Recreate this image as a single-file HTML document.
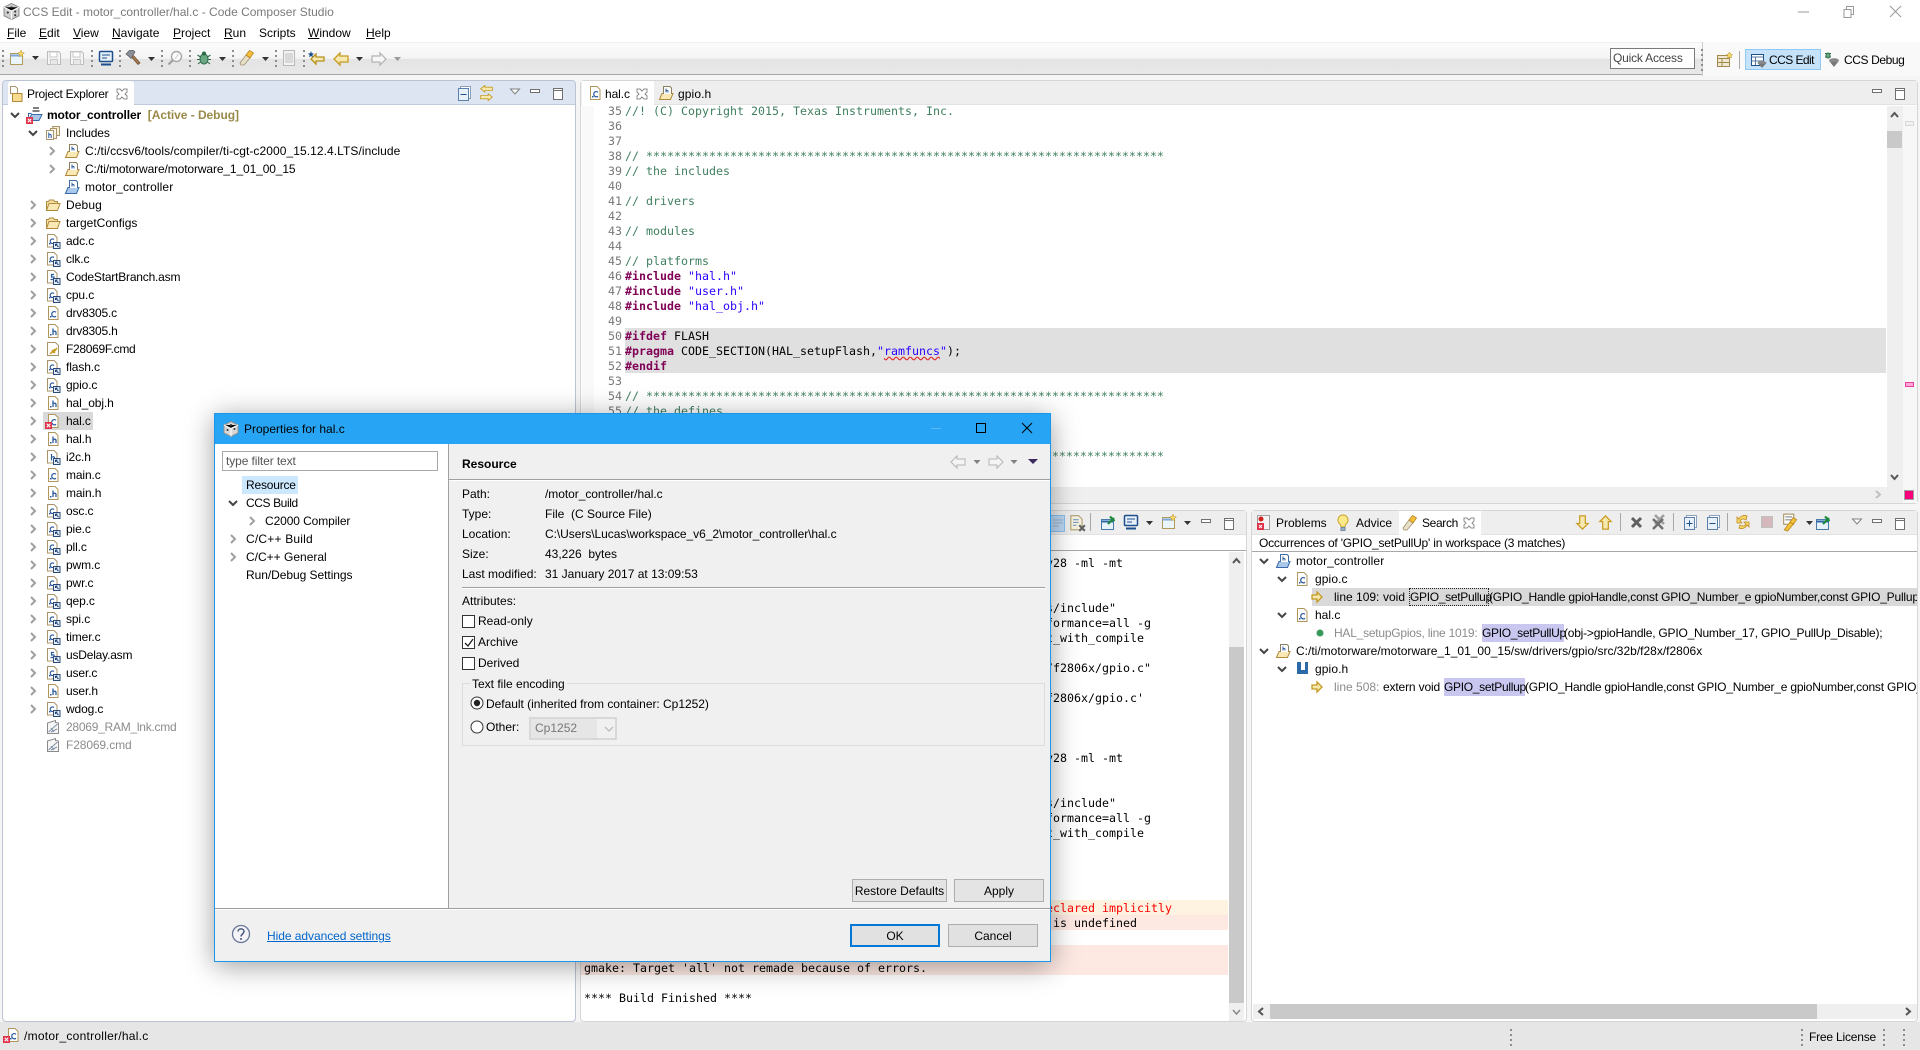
<!DOCTYPE html>
<html><head><meta charset="utf-8"><title>CCS Edit</title>
<style>
html,body{margin:0;padding:0;width:1920px;height:1050px;overflow:hidden;background:#f5f5f5;font:12px/18px "Liberation Sans",sans-serif;color:#000}
*{box-sizing:border-box}
.a{position:absolute;white-space:pre;height:18px;line-height:18px}
svg{position:absolute;overflow:visible}
.r{position:absolute;height:18px;white-space:pre;display:flex;align-items:center;letter-spacing:-.12px}
.r svg{position:static;flex:none}
.r .c{width:10px;height:12px;margin-right:7px}
.r .n{width:10px;height:12px;margin-right:7px}
.r .i{width:16px;height:16px;margin-right:5px}
.p{position:absolute;border:1px solid #d6d6d6;border-radius:4px;background:#fff;overflow:hidden}
.g{position:absolute;width:2px;background:repeating-linear-gradient(#8c8c8c 0 2px,transparent 2px 5px)}
.m u{text-decoration:underline}
.mono{position:absolute;font:11.63px/15px "DejaVu Sans Mono",monospace;white-space:pre;height:15px}
.ln{position:absolute;left:590px;width:32px;text-align:right;color:#787878;font:11.63px/15px "DejaVu Sans Mono",monospace}
.cd{position:absolute;left:625px;font:11.63px/15px "DejaVu Sans Mono",monospace;white-space:pre;color:#3f7f5f}
.k{color:#7f0055;font-weight:bold}.s{color:#2a00ff}.b{color:#000}
#dlg{position:absolute;left:214px;top:413px;width:837px;height:549px;background:#f0f0f0;border:1px solid #1a96ea;box-shadow:0 4px 26px rgba(0,0,0,.38);z-index:10}
.btn{position:absolute;height:23px;border:1px solid #adadad;background:#e1e1e1;text-align:center;line-height:22px}
.cb{position:absolute;width:13px;height:13px;border:1px solid #333;background:#fff}
</style></head><body>
<svg width="0" height="0" style="position:absolute">
<defs>
<symbol id="ch" viewBox="0 0 10 12"><path d="M3 2l4 4-4 4" fill="none" stroke="#a0a0a0" stroke-width="2"/></symbol>
<symbol id="dn" viewBox="0 0 10 12"><path d="M1 4l4 4 4-4" fill="none" stroke="#444" stroke-width="2"/></symbol>
<symbol id="fc" viewBox="0 0 16 16"><path d="M3.500 1.500h6.500l3 3v10h-9.500z" fill="#fff" stroke="#b0965a"/><path d="M11 7.200a2.600 2.600 0 1 0 0 4" fill="none" stroke="#2c5b9c" stroke-width="1.300"/><rect x="5" y="11" width="1.500" height="1.500" fill="#2c5b9c"/></symbol>
<symbol id="fh" viewBox="0 0 16 16"><path d="M3.500 1.500h6.500l3 3v10h-9.500z" fill="#fff" stroke="#b0965a"/><path d="M8 5.500v6.500M8 9c2-1.500 3-.8 3 .8v2.200" fill="none" stroke="#2c5b9c" stroke-width="1.300"/><rect x="5" y="11" width="1.500" height="1.500" fill="#2c5b9c"/></symbol>
<symbol id="fl" viewBox="0 0 16 16"><path d="M2.500 1.500h6.500l3 3v9.500h-9.500z" fill="#fff" stroke="#a89468"/><path d="M9 6.500a2.300 2.300 0 1 0 0 3.500" fill="none" stroke="#2c5b9c" stroke-width="1.200"/><rect x="4" y="10" width="1.400" height="1.400" fill="#2c5b9c"/><rect x="8.500" y="9.500" width="6.500" height="6" fill="#e8eef7" stroke="#2a4a7a"/><path d="M10.500 11l3 3M10.500 11h2M10.500 11v2" stroke="#1d3f78" fill="none"/></symbol>
<symbol id="fs" viewBox="0 0 16 16"><path d="M2.500 1.500h6.500l3 3v9.500h-9.500z" fill="#fff" stroke="#a89468"/><path d="M9 5.500H6.500v2.500H9v2.500H5.500" fill="none" stroke="#2c5b9c" stroke-width="1.200"/><rect x="8.500" y="9.500" width="6.500" height="6" fill="#e8eef7" stroke="#2a4a7a"/><path d="M10.500 11l3 3M10.500 11h2M10.500 11v2" stroke="#1d3f78" fill="none"/></symbol>
<symbol id="fhl" viewBox="0 0 16 16"><path d="M2.500 1.500h6.500l3 3v9.500h-9.500z" fill="#fff" stroke="#a89468"/><path d="M6.500 5v6.500M6.500 8.500c2-1.500 3-.8 3 .8v2.200" fill="none" stroke="#2c5b9c" stroke-width="1.200"/><rect x="8.500" y="9.500" width="6.500" height="6" fill="#e8eef7" stroke="#2a4a7a"/><path d="M10.500 11l3 3M10.500 11h2M10.500 11v2" stroke="#1d3f78" fill="none"/></symbol>
<symbol id="cmd" viewBox="0 0 16 16"><path d="M2.500 1.500h8l3 3v10h-11z" fill="#fff" stroke="#a89468"/><path d="M5 13l5-5M8 12l4-5M7 9l3 3" stroke="#c89a20" stroke-width="1.500" fill="none"/></symbol>
<symbol id="cmdg" viewBox="0 0 16 16"><path d="M2.500 14.500V4l8-2.500v2l3 .5v10.500z" fill="#f6f6f6" stroke="#8a8a8a"/><path d="M3.500 13l9-8M6 13l6-3M6 9l3 4" stroke="#8090a8" fill="none"/></symbol>
<symbol id="fo" viewBox="0 0 16 16"><path d="M1.500 13.500V4.500h2l1-1.500h4l1 1.500h3v2" fill="#f3dfa0" stroke="#b08a3c"/><path d="M1.500 13.500l2.500-7h11l-2.500 7z" fill="#fbe9b5" stroke="#b08a3c"/></symbol>
<symbol id="foh" viewBox="0 0 16 16"><path d="M1.500 14.500l2.500-6h11l-2.500 6z" fill="#fbe9b5" stroke="#b08a3c"/><path d="M5.500 9V1.500h6.500l1.500 1.500v6" fill="#fff" stroke="#8a8060"/><path d="M8 3.500v4M8 6c1.300-1 2-.5 2 .5v1" stroke="#2c5b9c" fill="none"/></symbol>
<symbol id="fob" viewBox="0 0 16 16"><path d="M1.500 14.500l2.500-6h11l-2.500 6z" fill="#a9c8ea" stroke="#3a6aa8"/><path d="M5.500 9V1.500h6.500l1.500 1.500v6" fill="#fff" stroke="#3a6aa8"/><path d="M8 3.500v4M8 6c1.300-1 2-.5 2 .5v1" stroke="#2c5b9c" fill="none"/></symbol>
<symbol id="inc" viewBox="0 0 16 16"><path d="M7.500 1.500h7v9h-3z" fill="#f8f0d8" stroke="#a89468"/><path d="M5.500 3.500h6v10h-6z" fill="#fbf5e0" stroke="#a89468"/><rect x="1.500" y="5.500" width="7" height="9" fill="#fff" stroke="#a89468"/><path d="M3.800 7.500v5.500M3.800 10c1.300-1 2.400-.5 2.400.5V13" stroke="#2c5b9c" fill="none"/></symbol>
<symbol id="prj" viewBox="0 0 16 16"><path d="M1.500 13.500l3-6h10.500l-3 6z" fill="#a9c8ea" stroke="#3a6aa8"/><path d="M1.500 13.500V6.500h3" fill="none" stroke="#3a6aa8"/><path d="M6 1h6M5.500 4h7" stroke="#555" stroke-width="1.400"/></symbol>
<symbol id="err" viewBox="0 0 8 8"><rect width="8" height="8" fill="#e0324a"/><path d="M2 2l4 4M6 2l-4 4" stroke="#fff" stroke-width="1.300"/></symbol>
<symbol id="x" viewBox="0 0 16 16"><path d="M3 3h3l2 2 2-2h3v3l-2 2 2 2v3h-3l-2-2-2 2H3v-3l2-2-2-2z" fill="#fff" stroke="#8c8c8c"/></symbol>
<symbol id="mn" viewBox="0 0 16 16"><rect x="3.500" y="5.500" width="9" height="3" fill="#fff" stroke="#707070"/></symbol>
<symbol id="mx" viewBox="0 0 16 16"><rect x="3.500" y="2.500" width="9" height="11" fill="#fff" stroke="#707070"/><path d="M3.500 4.500h9" stroke="#707070"/></symbol>
<symbol id="mu" viewBox="0 0 16 16"><path d="M3.500 5h9L8 10z" fill="#fff" stroke="#808080"/></symbol>
<symbol id="ca" viewBox="0 0 8 8"><path d="M0 2h7L3.500 6z" fill="#333"/></symbol>
<symbol id="arr" viewBox="0 0 18 18"><path d="M8 3L2 9l6 6v-3h8V6H8z" fill="#f5e9b0" stroke="#c89a20" stroke-width="1.300"/></symbol>
<symbol id="arg" viewBox="0 0 18 18"><path d="M8 3L2 9l6 6v-3h8V6H8z" fill="#f7f7f7" stroke="#b4b4b4" stroke-width="1.300"/></symbol>
<symbol id="mon" viewBox="0 0 16 16"><rect x="1.500" y="1.500" width="13" height="10" rx="1" fill="#e8f0fa" stroke="#1d4f8c" stroke-width="1.500"/><path d="M4 5h8M4 8h5" stroke="#1d4f8c"/><path d="M3 14.500h10" stroke="#1d4f8c" stroke-width="2"/></symbol>
<symbol id="new" viewBox="0 0 16 16"><rect x="1.500" y="3.500" width="12" height="11" fill="#eaf4fb" stroke="#b09a5a"/><path d="M1.500 5.500h12" stroke="#7fa8d8" stroke-width="2"/><path d="M12 0l1 2.500 2.500.5-2 1.500.5 2.500L12 5.500 10 7l.5-2.500-2-1.500 2.500-.5z" fill="#f5d867" stroke="#b8902a" stroke-width=".5"/></symbol>
<symbol id="sv" viewBox="0 0 16 16"><path d="M1.500 1.500h11l2 2v11h-13z" fill="#f4f4f4" stroke="#bcbcbc"/><rect x="4" y="2" width="7" height="5" fill="#fff" stroke="#c8c8c8"/><rect x="4.500" y="9.500" width="7" height="5" fill="#e8e8e8" stroke="#c8c8c8"/></symbol>
<symbol id="ham" viewBox="0 0 16 16"><path d="M6.500 7l6.500 7.500 2-1.500L8.500 5.500" fill="#a87a50" stroke="#6a4a2c" stroke-width=".7"/><path d="M1 4l3.500-3.500h4L10 2 7 7l-1 1.500-2-2z" fill="#8b8f96" stroke="#55585c" stroke-width=".7"/></symbol>
<symbol id="mag" viewBox="0 0 16 16"><circle cx="9.500" cy="6.500" r="5" fill="#fdfdfd" stroke="#a8a8a8" stroke-width="1.400"/><path d="M6 10L1.500 14.500" stroke="#a0a0a0" stroke-width="2.200"/><path d="M8 9l3.500-5" stroke="#c8c8c8"/></symbol>
<symbol id="bug" viewBox="0 0 16 16"><ellipse cx="8" cy="9" rx="4" ry="5" fill="#6aa884" stroke="#2e6a4a"/><circle cx="8" cy="3.500" r="2" fill="#2e6a4a"/><path d="M1.500 5l3 2M14.500 5l-3 2M1 9.500h3M15 9.500h-3M2 14l2.500-2M14 14l-2.500-2" stroke="#2e6a4a" stroke-width="1.100"/></symbol>
<symbol id="fla" viewBox="0 0 16 16"><path d="M1 13l6-8 4 3-6 7H2z" fill="#e8dfc8" stroke="#a09070" stroke-width=".8"/><path d="M7 5l3.500-4.500 4 2.500-3.500 5z" fill="#f2c03c" stroke="#b8861c" stroke-width=".8"/></symbol>
<symbol id="doc" viewBox="0 0 16 16"><rect x="2.500" y=".5" width="11" height="15" fill="#f2f2f2" stroke="#b8b8b8"/><rect x="5" y="4" width="6" height="8" fill="#fff" stroke="#bcbcbc"/><path d="M6 6h4M6 8h4M6 10h4" stroke="#b0b0b0"/></symbol>
<symbol id="bk" viewBox="0 0 18 18"><path d="M8 4L3 9l5 5v-3h8V7H8z" fill="#f5e9b0" stroke="#b8901e" stroke-width="1.300"/><path d="M3 1l.8 2.200L6 3.500 4.400 5l.5 2.200L3 6 1.100 7.200 1.600 5 0 3.500l2.200-.3z" fill="#1d4f8c"/></symbol>
<symbol id="pin" viewBox="0 0 16 16"><rect x="1.500" y="4.500" width="12" height="10" fill="#e8f2fb" stroke="#4a7aa8"/><path d="M1.500 6.500h12" stroke="#2c6aa8" stroke-width="2"/><path d="M8 9l6-6M10 1.500l4.500 4.500" stroke="#1c8a3c" stroke-width="2.200"/></symbol>
<symbol id="pers" viewBox="0 0 16 16"><rect x=".5" y="3.500" width="12" height="11" fill="#f0e8d0" stroke="#a08a50"/><path d="M.5 6.500h12M5 6.500v8M.5 10.500h12" stroke="#a08a50"/><path d="M12.500 0l1 2 2 .5-1.500 1.500.5 2-2-1-2 1 .5-2L9.500 2.500l2-.5z" fill="#f5d867" stroke="#b8902a" stroke-width=".5"/></symbol>
<symbol id="edit" viewBox="0 0 16 16"><rect x=".5" y="1.500" width="12" height="11" fill="#fff" stroke="#1d4f8c"/><path d="M.5 4h12M4.500 4v8M.5 8h12" stroke="#5a7aa0"/><ellipse cx="11" cy="10" rx="4.500" ry="2" fill="#888"/><path d="M7.500 11l3.500 4 3.500-4" fill="#777"/></symbol>
<symbol id="dbg" viewBox="0 0 16 16"><path d="M1 1.500h2M5 1.500h2M1 5h2M5 5h2" stroke="#2e6a4a"/><ellipse cx="4" cy="3.500" rx="2" ry="2.500" fill="#6aa884" stroke="#2e6a4a"/><ellipse cx="10" cy="8.500" rx="5" ry="2.300" fill="#888"/><path d="M6 10l4 5 4-5" fill="#777"/></symbol>
</defs></svg>

<!-- title -->
<div style="position:absolute;left:0;top:0;width:1920px;height:42px;background:#fff"></div>
<svg style="left:3px;top:3px" width="17" height="17" viewBox="0 0 16 16"><path d="M8 .5l7 3.500v8l-7 3.500-7-3.500V4z" fill="#d0d0d0" stroke="#909090"/><path d="M1 4l7 3.500L15 4M8 7.500v8" stroke="#fff"/><circle cx="8" cy="4" r="1" fill="#333"/><circle cx="4.500" cy="9" r="1" fill="#333"/><circle cx="11.500" cy="8" r="1" fill="#333"/><circle cx="11.500" cy="11.500" r="1" fill="#333"/></svg>
<div class="a" style="left:23px;top:3px;color:#7a7a7a">CCS Edit - motor_controller/hal.c - Code Composer Studio</div>
<div class="m">
<div class="a" style="left:7px;top:24px"><u>F</u>ile</div><div class="a" style="left:39px;top:24px"><u>E</u>dit</div><div class="a" style="left:73px;top:24px"><u>V</u>iew</div><div class="a" style="left:112px;top:24px"><u>N</u>avigate</div><div class="a" style="left:173px;top:24px"><u>P</u>roject</div><div class="a" style="left:224px;top:24px"><u>R</u>un</div><div class="a" style="left:259px;top:24px">Scripts</div><div class="a" style="left:308px;top:24px"><u>W</u>indow</div><div class="a" style="left:366px;top:24px"><u>H</u>elp</div>
</div>
<svg style="left:1798px;top:5px" width="115" height="14"><path d="M0 7h11" stroke="#999"/><path d="M46 4.500h7v8h-7zM48.500 4.500V1.500h7v8h-2.500" fill="none" stroke="#999"/><path d="M92 1l11 11M103 1L92 12" stroke="#999"/></svg>

<!-- toolbar -->
<div style="position:absolute;left:0;top:42px;width:1702px;height:33px;background:linear-gradient(#fbfbfb 0,#f4f4f4 50%,#e4e4e4 52%,#e8e8e8 100%);border-bottom:1px solid #a8a8a8;border-top:1px solid #f0f0f0"></div>
<div style="position:absolute;left:1702px;top:42px;width:218px;height:34px;background:#f9f9f9;border-left:1px solid #ccc"></div>
<div class="g" style="left:2px;top:50px;height:18px"></div>
<svg style="left:9px;top:50px" width="16" height="16"><use href="#new"/></svg><svg style="left:32px;top:54px" width="8" height="8"><use href="#ca"/></svg>
<svg style="left:46px;top:50px" width="16" height="16"><use href="#sv"/></svg><svg style="left:69px;top:50px" width="16" height="16"><use href="#sv"/></svg>
<div class="g" style="left:91px;top:50px;height:18px"></div>
<svg style="left:98px;top:50px" width="16" height="16"><use href="#mon"/></svg>
<div class="g" style="left:119px;top:50px;height:18px"></div>
<svg style="left:125px;top:50px" width="16" height="16"><use href="#ham"/></svg><svg style="left:148px;top:55px" width="8" height="8"><use href="#ca"/></svg>
<div class="g" style="left:161px;top:50px;height:18px"></div>
<svg style="left:167px;top:50px" width="16" height="16"><use href="#mag"/></svg>
<div class="g" style="left:189px;top:50px;height:18px"></div>
<svg style="left:196px;top:50px" width="16" height="16"><use href="#bug"/></svg><svg style="left:219px;top:55px" width="8" height="8"><use href="#ca"/></svg>
<div class="g" style="left:232px;top:50px;height:18px"></div>
<svg style="left:239px;top:50px" width="16" height="16"><use href="#fla"/></svg><svg style="left:262px;top:55px" width="8" height="8"><use href="#ca"/></svg>
<div class="g" style="left:275px;top:50px;height:18px"></div>
<svg style="left:281px;top:50px" width="16" height="16"><use href="#doc"/></svg>
<div class="g" style="left:303px;top:50px;height:18px"></div>
<svg style="left:308px;top:50px" width="18" height="18"><use href="#bk"/></svg>
<svg style="left:332px;top:50px" width="18" height="18"><use href="#arr"/></svg><svg style="left:356px;top:55px" width="8" height="8"><use href="#ca"/></svg>
<svg style="left:370px;top:50px;transform:scaleX(-1)" width="18" height="18"><use href="#arg"/></svg><svg style="left:394px;top:55px" width="8" height="8"><use href="#ca" style="opacity:.45"/></svg>
<div style="position:absolute;left:1610px;top:48px;width:85px;height:21px;border:1px solid #7a7a7a;background:#fff;line-height:19px;padding-left:2px;color:#444;letter-spacing:-.2px">Quick Access</div>
<div class="g" style="left:1701px;top:49px;height:22px"></div>
<svg style="left:1717px;top:52px" width="16" height="16"><use href="#pers"/></svg>
<div style="position:absolute;left:1739px;top:51px;width:1px;height:18px;background:#aaa"></div>
<div style="position:absolute;left:1745px;top:49px;width:76px;height:21px;background:#c6e2f9;border:1px solid #90c8f6"></div>
<svg style="left:1751px;top:53px" width="16" height="16"><use href="#edit"/></svg>
<div class="a" style="left:1769px;top:51px;letter-spacing:-.55px">CCS Edit</div>
<svg style="left:1824px;top:52px" width="16" height="16"><use href="#dbg"/></svg>
<div class="a" style="left:1844px;top:51px;letter-spacing:-.4px">CCS Debug</div>

<!-- project explorer -->
<div class="p" style="left:2px;top:80px;width:574px;height:942px;border-color:#bcc3d2"></div>
<div style="position:absolute;left:3px;top:81px;width:572px;height:24px;background:#dde5f3;border-bottom:1px solid #c0cadb;border-radius:3px 3px 0 0"></div>
<div style="position:absolute;left:8px;top:81px;width:126px;height:25px;background:#fff;border-radius:3px 3px 0 0"></div>
<svg style="left:8px;top:85px" width="16" height="18" viewBox="0 0 16 18"><path d="M2.500 1.500h5l2 2v5h-7z" fill="#fff" stroke="#a89468"/><path d="M4.500 8.500h9.500v8h-9.500z" fill="#f8dc90" stroke="#b08a3c"/></svg>
<div class="a" style="left:27px;top:85px;letter-spacing:-.25px">Project Explorer</div>
<svg style="left:114px;top:86px" width="16" height="16"><use href="#x"/></svg>
<svg style="left:457px;top:85px" width="16" height="16" viewBox="0 0 16 16"><rect x="3.500" y="1.500" width="10" height="12" fill="#fff" stroke="#8ca0bc"/><rect x="1.500" y="3.500" width="10" height="12" fill="#e8f0fa" stroke="#5a7fa8"/><path d="M3.500 9.500h6" stroke="#1d4f8c"/></svg>
<svg style="left:479px;top:84px" width="15" height="18" viewBox="0 0 18 20"><path d="M7 1L2 5l5 4V7h9V3H7zM11 11l5 4-5 4v-2H2v-4h9z" fill="#f5e9b0" stroke="#c49a20"/></svg>
<svg style="left:507px;top:84px" width="16" height="16"><use href="#mu"/></svg><svg style="left:527px;top:84px" width="16" height="16"><use href="#mn"/></svg><svg style="left:550px;top:86px" width="16" height="16"><use href="#mx"/></svg>

<div class="r" style="left:10px;top:106px;letter-spacing:0"><svg class="c"><use href="#dn"/></svg><svg class="i" style="margin-right:4px"><use href="#prj"/></svg><span><b style="letter-spacing:-.12px">motor_controller</b>  <b style="color:#9a8a4a;letter-spacing:-.05px">[Active - Debug]</b></span></div>
<svg style="left:26px;top:117px" width="7" height="7"><use href="#err"/></svg>
<div class="r" style="left:28px;top:124px"><svg class="c"><use href="#dn"/></svg><svg class="i"><use href="#inc"/></svg><span>Includes</span></div>
<div class="r" style="left:47px;top:142px;letter-spacing:.07px"><svg class="c"><use href="#ch"/></svg><svg class="i"><use href="#foh"/></svg><span>C:/ti/ccsv6/tools/compiler/ti-cgt-c2000_15.12.4.LTS/include</span></div>
<div class="r" style="left:47px;top:160px"><svg class="c"><use href="#ch"/></svg><svg class="i"><use href="#foh"/></svg><span>C:/ti/motorware/motorware_1_01_00_15</span></div>
<div class="r" style="left:47px;top:178px;letter-spacing:.1px"><svg class="n"></svg><svg class="i"><use href="#fob"/></svg><span>motor_controller</span></div>
<div class="r" style="left:28px;top:196px;letter-spacing:.1px"><svg class="c"><use href="#ch"/></svg><svg class="i"><use href="#fo"/></svg><span>Debug</span></div>
<div class="r" style="left:28px;top:214px;letter-spacing:0"><svg class="c"><use href="#ch"/></svg><svg class="i"><use href="#fo"/></svg><span>targetConfigs</span></div>
<div class="r" style="left:28px;top:232px"><svg class="c"><use href="#ch"/></svg><svg class="i"><use href="#fl"/></svg><span>adc.c</span></div>
<div class="r" style="left:28px;top:250px"><svg class="c"><use href="#ch"/></svg><svg class="i"><use href="#fl"/></svg><span>clk.c</span></div>
<div class="r" style="left:28px;top:268px;letter-spacing:-.2px"><svg class="c"><use href="#ch"/></svg><svg class="i"><use href="#fs"/></svg><span>CodeStartBranch.asm</span></div>
<div class="r" style="left:28px;top:286px"><svg class="c"><use href="#ch"/></svg><svg class="i"><use href="#fl"/></svg><span>cpu.c</span></div>
<div class="r" style="left:28px;top:304px;letter-spacing:-.2px"><svg class="c"><use href="#ch"/></svg><svg class="i"><use href="#fc"/></svg><span>drv8305.c</span></div>
<div class="r" style="left:28px;top:322px;letter-spacing:-.2px"><svg class="c"><use href="#ch"/></svg><svg class="i"><use href="#fh"/></svg><span>drv8305.h</span></div>
<div class="r" style="left:28px;top:340px;letter-spacing:-.3px"><svg class="c"><use href="#ch"/></svg><svg class="i"><use href="#cmd"/></svg><span>F28069F.cmd</span></div>
<div class="r" style="left:28px;top:358px"><svg class="c"><use href="#ch"/></svg><svg class="i"><use href="#fl"/></svg><span>flash.c</span></div>
<div class="r" style="left:28px;top:376px"><svg class="c"><use href="#ch"/></svg><svg class="i"><use href="#fl"/></svg><span>gpio.c</span></div>
<div class="r" style="left:28px;top:394px"><svg class="c"><use href="#ch"/></svg><svg class="i"><use href="#fh"/></svg><span>hal_obj.h</span></div>
<div style="position:absolute;left:43px;top:412px;width:50px;height:18px;background:#d9d9d9"></div>
<div class="r" style="left:28px;top:412px"><svg class="c"><use href="#ch"/></svg><svg class="i"><use href="#fc"/></svg><span>hal.c</span></div>
<svg style="left:45px;top:422px" width="7" height="7"><use href="#err"/></svg>
<div class="r" style="left:28px;top:430px"><svg class="c"><use href="#ch"/></svg><svg class="i"><use href="#fh"/></svg><span>hal.h</span></div>
<div class="r" style="left:28px;top:448px"><svg class="c"><use href="#ch"/></svg><svg class="i"><use href="#fhl"/></svg><span>i2c.h</span></div>
<div class="r" style="left:28px;top:466px"><svg class="c"><use href="#ch"/></svg><svg class="i"><use href="#fc"/></svg><span>main.c</span></div>
<div class="r" style="left:28px;top:484px"><svg class="c"><use href="#ch"/></svg><svg class="i"><use href="#fh"/></svg><span>main.h</span></div>
<div class="r" style="left:28px;top:502px"><svg class="c"><use href="#ch"/></svg><svg class="i"><use href="#fl"/></svg><span>osc.c</span></div>
<div class="r" style="left:28px;top:520px"><svg class="c"><use href="#ch"/></svg><svg class="i"><use href="#fl"/></svg><span>pie.c</span></div>
<div class="r" style="left:28px;top:538px"><svg class="c"><use href="#ch"/></svg><svg class="i"><use href="#fl"/></svg><span>pll.c</span></div>
<div class="r" style="left:28px;top:556px"><svg class="c"><use href="#ch"/></svg><svg class="i"><use href="#fl"/></svg><span>pwm.c</span></div>
<div class="r" style="left:28px;top:574px"><svg class="c"><use href="#ch"/></svg><svg class="i"><use href="#fl"/></svg><span>pwr.c</span></div>
<div class="r" style="left:28px;top:592px"><svg class="c"><use href="#ch"/></svg><svg class="i"><use href="#fl"/></svg><span>qep.c</span></div>
<div class="r" style="left:28px;top:610px"><svg class="c"><use href="#ch"/></svg><svg class="i"><use href="#fl"/></svg><span>spi.c</span></div>
<div class="r" style="left:28px;top:628px"><svg class="c"><use href="#ch"/></svg><svg class="i"><use href="#fl"/></svg><span>timer.c</span></div>
<div class="r" style="left:28px;top:646px;letter-spacing:-.2px"><svg class="c"><use href="#ch"/></svg><svg class="i"><use href="#fs"/></svg><span>usDelay.asm</span></div>
<div class="r" style="left:28px;top:664px"><svg class="c"><use href="#ch"/></svg><svg class="i"><use href="#fl"/></svg><span>user.c</span></div>
<div class="r" style="left:28px;top:682px"><svg class="c"><use href="#ch"/></svg><svg class="i"><use href="#fh"/></svg><span>user.h</span></div>
<div class="r" style="left:28px;top:700px"><svg class="c"><use href="#ch"/></svg><svg class="i"><use href="#fl"/></svg><span>wdog.c</span></div>
<div class="r" style="left:28px;top:718px;color:#8c8c8c;letter-spacing:-.25px"><svg class="n"></svg><svg class="i"><use href="#cmdg"/></svg><span>28069_RAM_lnk.cmd</span></div>
<div class="r" style="left:28px;top:736px;color:#8c8c8c"><svg class="n"></svg><svg class="i"><use href="#cmdg"/></svg><span>F28069.cmd</span></div>

<!-- editor -->
<div class="p" style="left:580px;top:80px;width:1338px;height:424px"></div>
<div style="position:absolute;left:581px;top:81px;width:1336px;height:24px;background:#eee;border-bottom:1px solid #e2e2e2"></div>
<div style="position:absolute;left:582px;top:81px;width:72px;height:25px;background:#fff"></div>
<svg style="left:587px;top:85px" width="16" height="16"><use href="#fc"/></svg>
<div class="a" style="left:605px;top:85px;letter-spacing:-.1px">hal.c</div>
<svg style="left:634px;top:86px" width="16" height="16"><use href="#x"/></svg>
<svg style="left:658px;top:85px" width="16" height="16"><use href="#foh"/></svg>
<div class="a" style="left:678px;top:85px;letter-spacing:.1px">gpio.h</div>
<svg style="left:1869px;top:84px" width="16" height="16"><use href="#mn"/></svg><svg style="left:1892px;top:86px" width="16" height="16"><use href="#mx"/></svg>
<div style="position:absolute;left:582px;top:106px;width:12px;height:380px;background:#f9f9f9"></div>
<div style="position:absolute;left:625px;top:328px;width:1261px;height:45px;background:#e0e0e0"></div>
<div style="position:absolute;left:581px;top:104px;width:1306px;height:383px;overflow:hidden">
<div style="position:absolute;left:-581px;top:-104px;width:1900px;height:600px">
<div class="ln" style="top:104px">35<br>36<br>37<br>38<br>39<br>40<br>41<br>42<br>43<br>44<br>45<br>46<br>47<br>48<br>49<br>50<br>51<br>52<br>53<br>54<br>55<br>56<br>57<br>58</div>
<div class="cd" style="top:104px">//! (C) Copyright 2015, Texas Instruments, Inc.


// **************************************************************************
// the includes

// drivers

// modules

// platforms
<span class="k">#include</span> <span class="s">"hal.h"</span>
<span class="k">#include</span> <span class="s">"user.h"</span>
<span class="k">#include</span> <span class="s">"hal_obj.h"</span>

<span class="k">#ifdef</span><span class="b"> FLASH</span>
<span class="k">#pragma</span><span class="b"> CODE_SECTION(HAL_setupFlash,</span><span class="s">"<span style="text-decoration:underline wavy #e03030">ramfuncs</span>"</span><span class="b">);</span>
<span class="k">#endif</span>

// **************************************************************************
// the defines


// **************************************************************************</div>
</div></div>
<div style="position:absolute;left:1887px;top:106px;width:16px;height:381px;background:#efefef"></div>
<div style="position:absolute;left:1887px;top:131px;width:15px;height:17px;background:#c9c9c9"></div>
<svg style="left:1890px;top:111px" width="9" height="8"><path d="M1 6l3.500-4L8 6" fill="none" stroke="#555" stroke-width="2"/></svg>
<svg style="left:1890px;top:473px" width="9" height="8"><path d="M1 2l3.500 4L8 2" fill="none" stroke="#555" stroke-width="2"/></svg>
<div style="position:absolute;left:1903px;top:106px;width:14px;height:397px;background:#f7f7f7"></div>
<div style="position:absolute;left:1905px;top:121px;width:9px;height:5px;background:#f0f0f0;border:1px solid #d8d8d8"></div>
<div style="position:absolute;left:1905px;top:382px;width:9px;height:5px;background:#ffa8d8;border:1px solid #f040a0"></div>
<div style="position:absolute;left:1905px;top:491px;width:8px;height:8px;background:#f8007c;box-shadow:0 0 0 1px #a0a0a0"></div>
<div style="position:absolute;left:581px;top:487px;width:1322px;height:16px;background:#efefef"></div>
<svg style="left:1874px;top:490px" width="8" height="9"><path d="M2 1l4 3.500L2 8" fill="none" stroke="#c0c0c0" stroke-width="2"/></svg>

<!-- console -->
<div class="p" style="left:580px;top:510px;width:667px;height:512px"></div>
<div style="position:absolute;left:581px;top:511px;width:665px;height:24px;background:#eee;border-bottom:1px solid #e2e2e2"></div>
<div style="position:absolute;left:581px;top:550px;width:665px;height:1px;background:#a8a8a8"></div>
<div style="position:absolute;left:1040px;top:515px;width:25px;height:17px;background:#bcd9f4;border:1px solid #8cc0f0"></div>
<svg style="left:1052px;top:518px" width="12" height="12"><path d="M1 2h10M1 5h10M1 8h6" stroke="#9cb4cc"/></svg>
<svg style="left:1068px;top:514px" width="18" height="18" viewBox="0 0 16 16"><path d="M2.500 1.500h7l3 3v9.500h-10z" fill="#f4f0e0" stroke="#b0a070"/><path d="M4.500 5h5M4.500 7.500h5M4.500 10h3" stroke="#7a9cc0"/><path d="M10 10l5 5M15 10l-5 5" stroke="#606060" stroke-width="1.800"/></svg>
<div style="position:absolute;left:1090px;top:513px;width:1px;height:18px;background:#a8a8a8"></div>
<svg style="left:1100px;top:515px" width="16" height="16"><use href="#pin"/></svg>
<svg style="left:1123px;top:514px" width="16" height="16"><use href="#mon"/></svg><svg style="left:1146px;top:519px" width="8" height="8"><use href="#ca"/></svg>
<svg style="left:1161px;top:514px" width="16" height="16"><use href="#new"/></svg><svg style="left:1184px;top:519px" width="8" height="8"><use href="#ca"/></svg>
<svg style="left:1198px;top:514px" width="16" height="16"><use href="#mn"/></svg><svg style="left:1221px;top:516px" width="16" height="16"><use href="#mx"/></svg>
<div style="position:absolute;left:1229px;top:552px;width:15px;height:469px;background:#efefef"></div>
<div style="position:absolute;left:1229px;top:647px;width:15px;height:356px;background:#c9c9c9"></div>
<svg style="left:1232px;top:557px" width="9" height="8"><path d="M1 6l3.500-4L8 6" fill="none" stroke="#555" stroke-width="2"/></svg>
<svg style="left:1232px;top:1008px" width="9" height="8"><path d="M1 2l3.500 4L8 2" fill="none" stroke="#888" stroke-width="1.500"/></svg>
<div style="position:absolute;left:581px;top:900px;width:647px;height:15px;background:#fdf3e0"></div>
<div style="position:absolute;left:581px;top:915px;width:647px;height:15px;background:#fde8e2"></div>
<div style="position:absolute;left:581px;top:945px;width:647px;height:30px;background:#fde8e2"></div>
<div class="mono" style="left:1046px;top:556px">v28 -ml -mt</div>
<div class="mono" style="left:1046px;top:601px">s/include"</div>
<div class="mono" style="left:1046px;top:616px">formance=all -g</div>
<div class="mono" style="left:1046px;top:631px">t_with_compile</div>
<div class="mono" style="left:1046px;top:661px">/f2806x/gpio.c"</div>
<div class="mono" style="left:1046px;top:691px">f2806x/gpio.c'</div>
<div class="mono" style="left:1046px;top:751px">v28 -ml -mt</div>
<div class="mono" style="left:1046px;top:796px">s/include"</div>
<div class="mono" style="left:1046px;top:811px">formance=all -g</div>
<div class="mono" style="left:1046px;top:826px">t_with_compile</div>
<div class="mono" style="left:1046px;top:901px;color:#f00">eclared implicitly</div>
<div class="mono" style="left:1053px;top:916px">is undefined</div>
<div class="mono" style="left:584px;top:961px">gmake: Target 'all' not remade because of errors.</div>
<div class="mono" style="left:584px;top:991px">**** Build Finished ****</div>

<!-- search -->
<div class="p" style="left:1251px;top:510px;width:667px;height:512px"></div>
<div style="position:absolute;left:1252px;top:511px;width:665px;height:24px;background:#eee;border-bottom:1px solid #e2e2e2"></div>
<div style="position:absolute;left:1399px;top:511px;width:82px;height:25px;background:#fff"></div>
<svg style="left:1256px;top:514px" width="16" height="18" viewBox="0 0 16 18"><rect x="1.500" y="1.500" width="12" height="14" fill="#f4f4f4" stroke="#a0a0a0"/><circle cx="5" cy="5" r="2.500" fill="#d02020"/><path d="M1 9h7v7H1z" fill="#e0324a"/><path d="M3 11l3 3M6 11l-3 3" stroke="#fff"/></svg>
<div class="a" style="left:1276px;top:514px">Problems</div>
<svg style="left:1336px;top:514px" width="14" height="18" viewBox="0 0 14 18"><path d="M7 1a5 5 0 0 0-3 9c1 1 1 2 1 3h4c0-1 0-2 1-3a5 5 0 0 0-3-9z" fill="#fbe98a" stroke="#c8a020"/><rect x="5" y="13.500" width="4" height="3" fill="#9ab0c8" stroke="#7088a0"/></svg>
<div class="a" style="left:1356px;top:514px">Advice</div>
<svg style="left:1402px;top:515px" width="16" height="16"><use href="#fla"/></svg>
<div class="a" style="left:1422px;top:514px;letter-spacing:-.35px">Search</div>
<svg style="left:1461px;top:515px" width="16" height="16"><use href="#x"/></svg>
<svg style="left:1574px;top:514px;transform:rotate(-90deg)" width="17" height="17"><use href="#arr"/></svg>
<svg style="left:1597px;top:514px;transform:rotate(90deg)" width="17" height="17"><use href="#arr"/></svg>
<div style="position:absolute;left:1620px;top:513px;width:1px;height:18px;background:#a8a8a8"></div>
<svg style="left:1630px;top:516px" width="13" height="13"><path d="M2 2l9 9M11 2l-9 9" stroke="#606060" stroke-width="3"/></svg>
<svg style="left:1650px;top:513px" width="18" height="18"><path d="M5 2l9 9M14 2l-9 9" stroke="#a0a0a0" stroke-width="2.500"/><path d="M3 6l10 10M13 6L3 16" stroke="#707070" stroke-width="2.500"/></svg>
<div style="position:absolute;left:1673px;top:513px;width:1px;height:18px;background:#a8a8a8"></div>
<svg style="left:1683px;top:514px" width="16" height="16" viewBox="0 0 16 16"><rect x="3.500" y="1.500" width="10" height="12" fill="#fff" stroke="#8ca0bc"/><rect x="1.500" y="3.500" width="10" height="12" fill="#e8f0fa" stroke="#5a7fa8"/><path d="M3.500 9.500h6M6.500 6.500v6" stroke="#1d4f8c"/></svg>
<svg style="left:1706px;top:514px" width="16" height="16" viewBox="0 0 16 16"><rect x="3.500" y="1.500" width="10" height="12" fill="#fff" stroke="#8ca0bc"/><rect x="1.500" y="3.500" width="10" height="12" fill="#e8f0fa" stroke="#5a7fa8"/><path d="M3.500 9.500h6" stroke="#1d4f8c"/></svg>
<div style="position:absolute;left:1727px;top:513px;width:1px;height:18px;background:#a8a8a8"></div>
<svg style="left:1735px;top:514px" width="16" height="16"><path d="M12 2a6 6 0 0 0-8 3L2 3v6h5L5 7c2-3 5-2 6-1zM4 14a6 6 0 0 0 8-3l2 2V8H9l2 2c-2 3-5 2-6 1z" fill="#f5d867" stroke="#c08a20" stroke-width=".8"/></svg>
<svg style="left:1761px;top:516px" width="13" height="13"><rect x=".5" y=".5" width="11" height="11" fill="#d4b8bc" stroke="#c0c0c0"/></svg>
<svg style="left:1782px;top:513px" width="18" height="18" viewBox="0 0 16 16"><rect x="1.500" y="1" width="9" height="9" fill="#fff" stroke="#a89468"/><path d="M3 3.500h6M3 6h6" stroke="#888"/><path d="M2 15l5-7 3 2-5 6zM7 8l3-4 3 2-3 4" fill="#f2c03c" stroke="#b8861c" stroke-width=".7"/></svg>
<svg style="left:1806px;top:519px" width="8" height="8"><use href="#ca"/></svg>
<svg style="left:1815px;top:515px" width="16" height="16"><use href="#pin"/></svg>
<svg style="left:1849px;top:514px" width="16" height="16"><use href="#mu"/></svg><svg style="left:1869px;top:514px" width="16" height="16"><use href="#mn"/></svg><svg style="left:1892px;top:516px" width="16" height="16"><use href="#mx"/></svg>
<div class="a" style="left:1259px;top:534px;letter-spacing:-.2px">Occurrences of 'GPIO_setPullUp' in workspace (3 matches)</div>
<div style="position:absolute;left:1252px;top:551px;width:665px;height:1px;background:#a8a8a8"></div>
<div style="position:absolute;left:1252px;top:552px;width:665px;height:150px;overflow:hidden">
 <div style="position:absolute;left:59.500px;top:36px;width:605px;height:18px;background:#d9d9d9"></div>
 <div style="position:absolute;left:157px;top:36px;width:80px;height:18px;border:1px dotted #222"></div>
 <div style="position:absolute;left:230px;top:72px;width:82px;height:18px;background:#c9c6f0"></div>
 <div style="position:absolute;left:192px;top:126px;width:81px;height:18px;background:#c9c6f0"></div>
 <svg style="left:7px;top:3px" width="10" height="12"><use href="#dn"/></svg>
 <svg style="left:23px;top:1px" width="16" height="16"><use href="#fob"/></svg>
 <div class="a" style="left:44px;top:0;letter-spacing:.1px">motor_controller</div>
 <svg style="left:25px;top:21px" width="10" height="12"><use href="#dn"/></svg>
 <svg style="left:42px;top:19px" width="16" height="16"><use href="#fc"/></svg>
 <div class="a" style="left:63px;top:18px;letter-spacing:.1px">gpio.c</div>
 <svg style="left:59px;top:38px" width="14" height="14"><path d="M6 2l5 5-5 5V9H1V5h5z" fill="#f5e9b0" stroke="#c49a20" stroke-width="1.300"/></svg>
 <div class="a" style="left:82px;top:36px">line 109:</div>
 <div class="a" style="left:131px;top:36px">void</div>
 <div class="a" style="left:158px;top:36px;letter-spacing:-.3px">GPIO_setPullup</div>
 <div class="a" style="left:237px;top:36px;letter-spacing:-.2px">(GPIO_Handle gpioHandle,const GPIO_Number_e gpioNumber,const GPIO_Pullup_e pullup)</div>
 <svg style="left:25px;top:57px" width="10" height="12"><use href="#dn"/></svg>
 <svg style="left:42px;top:55px" width="16" height="16"><use href="#fc"/></svg>
 <div class="a" style="left:63px;top:54px">hal.c</div>
 <svg style="left:64px;top:77px" width="8" height="8"><circle cx="4" cy="4" r="3.500" fill="#3a9a5c"/></svg>
 <div class="a" style="left:82px;top:72px;color:#8c8c8c;letter-spacing:-.23px">HAL_setupGpios, line 1019:</div>
 <div class="a" style="left:230px;top:72px;letter-spacing:-.3px">GPIO_setPullUp</div>
 <div class="a" style="left:312px;top:72px;letter-spacing:-.22px">(obj-&gt;gpioHandle, GPIO_Number_17, GPIO_PullUp_Disable);</div>
 <svg style="left:7px;top:93px" width="10" height="12"><use href="#dn"/></svg>
 <svg style="left:23px;top:91px" width="16" height="16"><use href="#foh"/></svg>
 <div class="a" style="left:44px;top:90px">C:/ti/motorware/motorware_1_01_00_15/sw/drivers/gpio/src/32b/f28x/f2806x</div>
 <svg style="left:25px;top:111px" width="10" height="12"><use href="#dn"/></svg>
 <svg style="left:45px;top:110px" width="12" height="13"><path d="M0 0h4v8h4V0h3v12H0z" fill="#2a6aa8"/></svg>
 <div class="a" style="left:63px;top:108px;letter-spacing:.1px">gpio.h</div>
 <svg style="left:59px;top:128px" width="14" height="14"><path d="M6 2l5 5-5 5V9H1V5h5z" fill="#f5e9b0" stroke="#c49a20" stroke-width="1.300"/></svg>
 <div class="a" style="left:82px;top:126px;color:#8c8c8c">line 508:</div>
 <div class="a" style="left:131px;top:126px;letter-spacing:-.15px">extern void</div>
 <div class="a" style="left:192px;top:126px;letter-spacing:-.3px">GPIO_setPullup</div>
 <div class="a" style="left:273px;top:126px;letter-spacing:-.2px">(GPIO_Handle gpioHandle,const GPIO_Number_e gpioNumber,const GPIO_Pullup_e pullup);</div>
</div>
<div style="position:absolute;left:1253px;top:1004px;width:664px;height:15px;background:#efefef"></div>
<div style="position:absolute;left:1270px;top:1004px;width:547px;height:15px;background:#c9c9c9"></div>
<svg style="left:1257px;top:1007px" width="8" height="9"><path d="M6 1L2 4.500 6 8" fill="none" stroke="#555" stroke-width="2"/></svg>
<svg style="left:1904px;top:1007px" width="8" height="9"><path d="M2 1l4 3.500L2 8" fill="none" stroke="#555" stroke-width="2"/></svg>

<!-- status -->
<div style="position:absolute;left:0;top:1022px;width:1920px;height:28px;background:#e6e6e6"></div>
<svg style="left:5px;top:1027px" width="16" height="16"><use href="#fc"/></svg>
<svg style="left:3px;top:1036px" width="7" height="7"><use href="#err"/></svg>
<div class="a" style="left:24px;top:1027px;letter-spacing:.25px">/motor_controller/hal.c</div>
<div class="g" style="left:1510px;top:1029px;height:17px"></div>
<div class="g" style="left:1801px;top:1029px;height:17px"></div>
<div class="a" style="left:1809px;top:1028px;letter-spacing:-.2px">Free License</div>
<div class="g" style="left:1883px;top:1029px;height:17px"></div>
<div class="g" style="left:1903px;top:1029px;height:17px"></div>

<!-- dialog: child coordinates are relative to (215,414) -->
<div id="dlg">
 <div style="position:absolute;left:0;top:0;width:835px;height:30px;background:#27a5f4"></div>
 <svg style="left:8px;top:7px" width="16" height="16" viewBox="0 0 16 16"><path d="M8 .5l7 3.500v8l-7 3.500-7-3.500V4z" fill="#d8d8d8" stroke="#909090"/><path d="M1 4l7 3.500L15 4M8 7.500v8" stroke="#fff"/><circle cx="8" cy="4" r="1" fill="#333"/><circle cx="4.500" cy="9" r="1" fill="#333"/><circle cx="11.500" cy="8" r="1" fill="#333"/></svg>
 <div class="a" style="left:29px;top:6px">Properties for hal.c</div>
 <svg style="left:716px;top:8px" width="110" height="14"><path d="M0 6.500h10" stroke="#5fb8ef"/><rect x="45.500" y="1.500" width="9" height="9" fill="none" stroke="#000"/><path d="M91 1l10 10M101 1L91 11" stroke="#000"/></svg>
 <div style="position:absolute;left:0;top:30px;width:234px;height:464px;background:#fff;border-right:1px solid #a0a0a0"></div>
 <div style="position:absolute;left:7px;top:37px;width:216px;height:20px;border:1px solid #a8a8a8;background:#fff;line-height:18px;padding-left:3px;color:#555;letter-spacing:-.1px">type filter text</div>
 <div style="position:absolute;left:27px;top:62px;width:56px;height:18px;background:#cce8ff"></div>
 <div class="a" style="left:31px;top:62px;letter-spacing:-.2px">Resource</div>
 <svg style="left:13px;top:83px" width="10" height="12"><use href="#dn"/></svg>
 <div class="a" style="left:31px;top:80px;letter-spacing:-.4px">CCS Build</div>
 <svg style="left:32px;top:101px" width="10" height="12"><use href="#ch"/></svg>
 <div class="a" style="left:50px;top:98px;letter-spacing:-.1px">C2000 Compiler</div>
 <svg style="left:13px;top:119px" width="10" height="12"><use href="#ch"/></svg>
 <div class="a" style="left:31px;top:116px;letter-spacing:.2px">C/C++ Build</div>
 <svg style="left:13px;top:137px" width="10" height="12"><use href="#ch"/></svg>
 <div class="a" style="left:31px;top:134px">C/C++ General</div>
 <div class="a" style="left:31px;top:152px;letter-spacing:-.05px">Run/Debug Settings</div>

 <div class="a" style="left:247px;top:41px;font-weight:bold">Resource</div>
 <svg style="left:735px;top:41px" width="90" height="14"><path d="M7 1L1 7l6 6v-3h8V4H7z" fill="#f4f4f4" stroke="#b4b4b4"/><path d="M23.500 5h7L27 9z" fill="#808080"/><path d="M47 1l6 6-6 6v-3h-8V4h8z" fill="#f4f4f4" stroke="#b4b4b4"/><path d="M60.500 5h7L64 9z" fill="#808080"/><path d="M78 4h10l-5 5z" fill="#3a2a60"/></svg>
 <div style="position:absolute;left:234px;top:65px;width:601px;height:2px;background:linear-gradient(#a0a0a0 50%,#fff 50%)"></div>
 <div class="a" style="left:247px;top:71px">Path:</div><div class="a" style="left:330px;top:71px;letter-spacing:-.05px">/motor_controller/hal.c</div>
 <div class="a" style="left:247px;top:91px">Type:</div><div class="a" style="left:330px;top:91px">File  (C Source File)</div>
 <div class="a" style="left:247px;top:111px">Location:</div><div class="a" style="left:330px;top:111px;letter-spacing:-.05px">C:\Users\Lucas\workspace_v6_2\motor_controller\hal.c</div>
 <div class="a" style="left:247px;top:131px">Size:</div><div class="a" style="left:330px;top:131px">43,226  bytes</div>
 <div class="a" style="left:247px;top:151px">Last modified:</div><div class="a" style="left:330px;top:151px">31 January 2017 at 13:09:53</div>
 <div style="position:absolute;left:247px;top:173px;width:583px;height:2px;background:linear-gradient(#a0a0a0 50%,#fff 50%)"></div>
 <div class="a" style="left:247px;top:178px">Attributes:</div>
 <div class="cb" style="left:247px;top:201px"></div><div class="a" style="left:263px;top:198px">Read-only</div>
 <div class="cb" style="left:247px;top:222px"></div><svg style="left:249px;top:224px" width="10" height="10"><path d="M1 5l3 3 5-7" fill="none" stroke="#222" stroke-width="1.300"/></svg><div class="a" style="left:263px;top:219px">Archive</div>
 <div class="cb" style="left:247px;top:243px"></div><div class="a" style="left:263px;top:240px">Derived</div>
 <div style="position:absolute;left:247px;top:269px;width:583px;height:63px;border:1px solid #dcdcdc"></div>
 <div class="a" style="left:255px;top:261px;background:#f0f0f0;padding:0 2px">Text file encoding</div>
 <svg style="left:255px;top:282px" width="14" height="14"><circle cx="7" cy="7" r="6" fill="#fff" stroke="#333"/><circle cx="7" cy="7" r="3.200" fill="#222"/></svg>
 <div class="a" style="left:271px;top:281px;letter-spacing:-.03px">Default (inherited from container: Cp1252)</div>
 <svg style="left:255px;top:306px" width="14" height="14"><circle cx="7" cy="7" r="6" fill="#fff" stroke="#333"/></svg>
 <div class="a" style="left:271px;top:304px">Other:</div>
 <div style="position:absolute;left:314px;top:303px;width:88px;height:23px;border:2px solid #d8d8d8;background:#f0f0f0"></div>
 <div style="position:absolute;left:316px;top:305px;width:66px;height:19px;background:#e6e6e6;line-height:18px;padding-left:4px;color:#777">Cp1252</div>
 <svg style="left:389px;top:311px" width="10" height="8"><path d="M1 2l4 4 4-4" fill="none" stroke="#b0b0b0"/></svg>

 <div class="btn" style="left:637px;top:465px;width:95px;background:#e4e4e4">Restore Defaults</div>
 <div class="btn" style="left:739px;top:465px;width:90px;background:#e4e4e4">Apply</div>
 <div style="position:absolute;left:0;top:494px;width:835px;height:2px;background:linear-gradient(#a0a0a0 50%,#fff 50%)"></div>
 <svg style="left:16px;top:510px" width="20" height="20"><circle cx="10" cy="10" r="8.500" fill="#f4f4f8" stroke="#6a7898" stroke-width="1.300"/><path d="M7 7.500c0-3.500 6-3.500 6 0 0 2.500-3 2.500-3 5" fill="none" stroke="#4a5878" stroke-width="1.500"/><circle cx="10" cy="15" r="1" fill="#4a5878"/></svg>
 <div class="a" style="left:52px;top:513px;color:#0066cc;text-decoration:underline;letter-spacing:-.05px">Hide advanced settings</div>
 <div class="btn" style="left:635px;top:510px;width:90px;border:2px solid #0078d7;line-height:20px">OK</div>
 <div class="btn" style="left:733px;top:510px;width:90px">Cancel</div>
</div>
</body></html>
